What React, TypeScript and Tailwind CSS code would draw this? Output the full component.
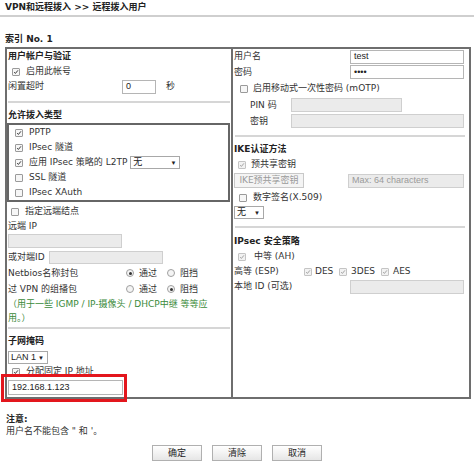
import React from 'react';

const font = { fontFamily: '"DejaVu Sans", "Noto Sans CJK SC", sans-serif' };

const Cb = ({ checked = false, disabled = false }: { checked?: boolean; disabled?: boolean }) => (
  <span
    className={`inline-flex items-center justify-center w-[8px] h-[8px] shrink-0 border rounded-[1px] ${
      disabled ? 'border-[#c4c4c4] bg-[#f2f2f2]' : 'border-[#9a9a9a] bg-[#f6f6f6]'
    }`}
  >
    {checked && (
      <svg viewBox="0 0 8 8" className="w-[8px] h-[8px]">
        <path
          d="M1.6 4.2 L3.2 5.9 L6.6 1.8"
          fill="none"
          stroke={disabled ? '#a0a0a0' : '#333'}
          strokeWidth="1.3"
        />
      </svg>
    )}
  </span>
);

const Radio = ({ on = false }: { on?: boolean }) => (
  <span className="inline-flex items-center justify-center w-[8px] h-[8px] shrink-0 rounded-full border border-[#a0a0a0] bg-[#f4f4f4]">
    {on && <span className="w-[3px] h-[3px] rounded-full bg-[#333]" />}
  </span>
);

const Field = ({
  w,
  h = 'h-[14px]',
  value,
  placeholder,
  disabled = false,
}: {
  w: string;
  h?: string;
  value?: string;
  placeholder?: string;
  disabled?: boolean;
}) => (
  <span
    className={`${w} ${h} shrink-0 flex items-center px-[3px] border text-[9px] ${
      disabled ? 'border-[#cfcfcf] bg-[#ebebeb]' : 'border-[#b5b5b5] bg-white'
    }`}
    style={{ fontFamily: '"Liberation Sans", Arial, sans-serif' }}
  >
    {value && <span className="text-[#222]">{value}</span>}
    {placeholder && <span className="text-[#9a9a9a]">{placeholder}</span>}
  </span>
);

const Sel = ({ w, text }: { w: string; text: string }) => (
  <span
    className={`${w} h-[13px] shrink-0 flex items-center justify-between pl-[2px] pr-[3px] border border-[#a8a8a8] bg-white text-[9px] text-[#222]`}
    style={{ fontFamily: '"Liberation Sans", "Noto Sans CJK SC", sans-serif' }}
  >
    <span>{text}</span>
    <span className="text-[6px]">▼</span>
  </span>
);

const Hr = () => <div className="h-[2px] bg-[#d6d6d6] mx-[1px]" />;

const CheckRow = ({
  label,
  checked,
  disabled,
  h = 'h-[15px]',
  pl = 'pl-[5px]',
  gap = 'gap-[6px]',
}: {
  label: string;
  checked?: boolean;
  disabled?: boolean;
  h?: string;
  pl?: string;
  gap?: string;
}) => (
  <div className={`${h} flex items-center ${pl} ${gap}`}>
    <Cb checked={checked} disabled={disabled} />
    <span>{label}</span>
  </div>
);

export default function App() {
  return (
    <div className="w-[474px] h-[466px] bg-white text-[#333] text-[9px] leading-none overflow-hidden" style={font}>
      <div className="h-[15px] pl-[5px] pt-[3px] font-bold text-[#222]">VPN和远程拨入 &gt;&gt; 远程拨入用户</div>
      <div className="h-[2px] bg-[#cfcfcf]" />
      <div className="h-[30px] pl-[5px] pb-[3px] flex items-end font-bold text-[#222]">索引 No. 1</div>

      <div className="ml-[5px] w-[466px] flex border-2 border-[#6e6e6e]">
        {/* left column */}
        <div className="w-[226px] border-r-2 border-[#6e6e6e] flex flex-col">
          <div className="h-[15px] flex items-center pl-[1px] font-bold text-[#222]">用户帐户与验证</div>
          <CheckRow label="启用此帐号" checked />
          <div className="h-[15px] flex items-center pl-[1px]">
            <span className="w-[114px]">闲置超时</span>
            <Field w="w-[34px]" value="0" />
            <span className="ml-[10px]">秒</span>
          </div>
          <div className="pt-[7px] pb-[5px]">
            <Hr />
          </div>
          <div className="h-[14px] flex items-center pl-[1px] font-bold text-[#222]">允许拨入类型</div>
          <div className="mt-[1px] mr-[1px] border-2 border-[#666] pl-[5px] py-0">
            <CheckRow label="PPTP" checked pl="pl-[1px]" gap="gap-[6px]" />
            <CheckRow label="IPsec 隧道" checked pl="pl-[1px]" />
            <div className="h-[15px] flex items-center pl-[1px] gap-[6px]">
              <Cb checked />
              <span>应用 IPsec 策略的 L2TP</span>
              <span className="-ml-[3px]">
                <Sel w="w-[50px]" text="无" />
              </span>
            </div>
            <CheckRow label="SSL 隧道" pl="pl-[1px]" />
            <CheckRow label="IPsec XAuth" pl="pl-[1px]" />
          </div>
          <div className="mt-[2px]">
            <CheckRow label="指定远端结点" pl="pl-[4px]" />
          </div>
          <div className="h-[14px] flex items-center pl-[1px]">远端 IP</div>
          <div className="mt-[1px] pl-[1px]">
            <Field w="w-[114px]" disabled />
          </div>
          <div className="mt-[2px] h-[15px] flex items-center pl-[1px] gap-[4px]">
            <span>或对端ID</span>
            <Field w="w-[114px]" h="h-[13px]" disabled />
          </div>
          <div className="h-[16px] flex items-center pl-[1px]">
            <span className="w-[118px]">Netbios名称封包</span>
            <Radio on />
            <span className="ml-[5px] w-[28px]">通过</span>
            <Radio />
            <span className="ml-[5px]">阻挡</span>
          </div>
          <div className="h-[16px] flex items-center pl-[1px]">
            <span className="w-[118px]">过 VPN 的组播包</span>
            <Radio />
            <span className="ml-[5px] w-[28px]">通过</span>
            <Radio on />
            <span className="ml-[5px]">阻挡</span>
          </div>
          <div className="pl-[1px] pr-[10px] leading-[14px] text-[#3a8a3a]">
            （用于一些 IGMP / IP-摄像头 / DHCP中继 等等应用。）
          </div>
          <div className="pt-[2px] pb-[5px]">
            <Hr />
          </div>
          <div className="h-[15px] flex items-center pl-[1px] font-bold text-[#222]">子网掩码</div>
          <div className="mt-[2px] pl-[1px]">
            <Sel w="w-[40px]" text="LAN 1" />
          </div>
          <div className="relative">
            <CheckRow label="分配固定 IP 地址" checked pl="pl-[5px]" />
            <div className="mt-[1px] pl-[1px] pb-[2px]">
              <Field w="w-[115px]" h="h-[15px]" value="192.168.1.123" />
            </div>
            <div className="absolute left-[-6px] top-[10px] w-[126px] h-[28px] border-[3px] border-[#e3161d]" />
          </div>
        </div>

        {/* right column */}
        <div className="flex-1 flex flex-col pl-[1px] pr-[3px]">
          <div className="h-[15px] flex items-center">
            <span className="w-[116px]">用户名</span>
            <Field w="w-[114px]" value="test" />
          </div>
          <div className="h-[16px] flex items-center">
            <span className="w-[116px]">密码</span>
            <Field w="w-[114px]" value="••••" />
          </div>
          <CheckRow label="启用移动式一次性密码 (mOTP)" h="h-[17px]" pl="pl-[6px]" gap="gap-[5px]" />
          <div className="h-[16px] flex items-center">
            <span className="w-[57px] pl-[16px]">PIN 码</span>
            <Field w="w-[111px]" disabled />
          </div>
          <div className="h-[16px] flex items-center">
            <span className="w-[57px] pl-[16px]">密钥</span>
            <Field w="w-[173px]" disabled />
          </div>
          <div className="pt-[6px] pb-[5px]">
            <Hr />
          </div>
          <div className="h-[15px] flex items-center font-bold text-[#222]">IKE认证方法</div>
          <CheckRow label="预共享密钥" checked disabled pl="pl-[4px]" gap="gap-[5px]" />
          <div className="h-[17px] flex items-center">
            <span className="w-[70px] h-[15px] flex items-center justify-center border border-[#c8c8c8] bg-[#f4f4f4] text-[#9a9a9a]">
              IKE预共享密钥
            </span>
            <span className="ml-[44px]">
              <Field w="w-[116px]" h="h-[14px]" placeholder="Max: 64 characters" disabled />
            </span>
          </div>
          <CheckRow label="数字签名(X.509)" h="h-[17px]" pl="pl-[5px]" gap="gap-[6px]" />
          <div className="h-[13px] flex items-center">
            <Sel w="w-[30px]" text="无" />
          </div>
          <div className="pt-[7px] pb-[6px]">
            <Hr />
          </div>
          <div className="h-[15px] flex items-center font-bold text-[#222]">IPsec 安全策略</div>
          <CheckRow label="中等 (AH)" checked disabled pl="pl-[4px]" gap="gap-[8px]" />
          <div className="h-[15px] flex items-center">
            <span className="w-[70px]">高等 (ESP)</span>
            <Cb checked disabled />
            <span className="ml-[3px] w-[24px]">DES</span>
            <Cb checked disabled />
            <span className="ml-[4px] w-[30px]">3DES</span>
            <Cb checked disabled />
            <span className="ml-[4px]">AES</span>
          </div>
          <div className="h-[15px] flex items-center">
            <span className="w-[116px]">本地 ID (可选)</span>
            <Field w="w-[114px]" disabled />
          </div>
        </div>
      </div>

      <div className="pl-[6px] pt-[13px] font-bold text-[#222] h-[27px] flex items-center">注意:</div>
      <div className="pl-[6px] h-[10px] flex items-center">用户名不能包含 " 和 '。</div>
      <div className="mt-[9px] flex justify-center gap-[10px]">
        {['确定', '清除', '取消'].map((t) => (
          <button
            key={t}
            className="w-[50px] h-[16px] border border-[#b0b0b0] bg-gradient-to-b from-white to-[#e6e6e6] text-[9px] text-[#222]"
          >
            {t}
          </button>
        ))}
      </div>
    </div>
  );
}
